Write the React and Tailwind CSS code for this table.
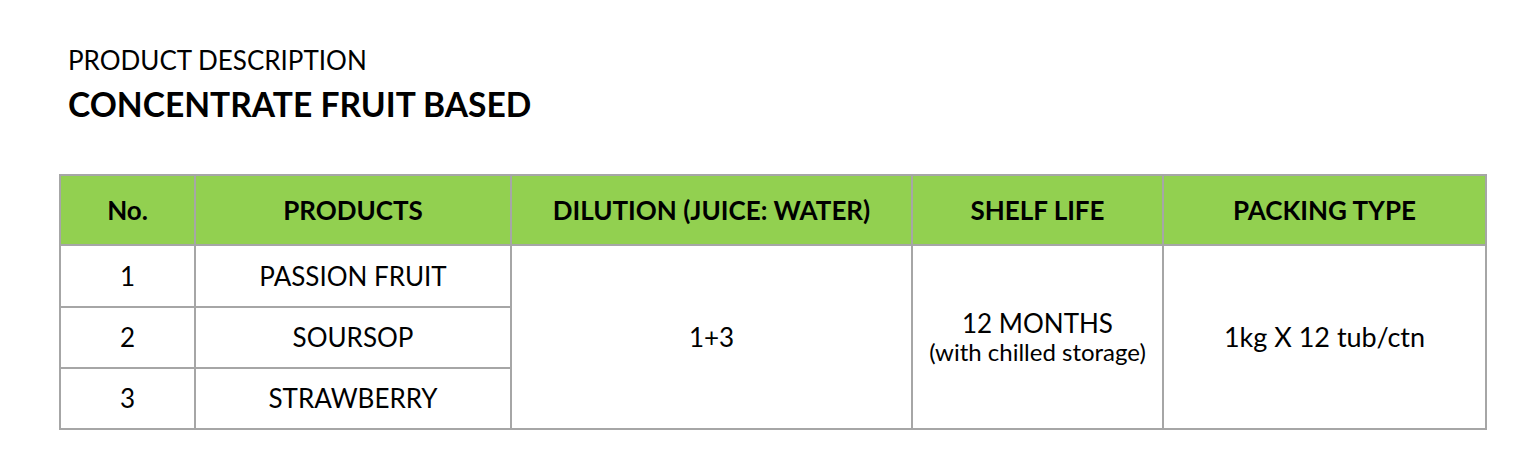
import React from 'react';

const rows = [
  { no: 1, name: 'PASSION FRUIT' },
  { no: 2, name: 'SOURSOP' },
  { no: 3, name: 'STRAWBERRY' },
];

const cell = 'border-2 border-[#a6a6a6] text-center align-middle';

export default function App() {
  return (
    <div className="min-h-[474px] w-[1536px] bg-white text-black" style={{ fontFamily: 'Lato, "Open Sans", sans-serif' }}>
      <div className="pl-[68px] pt-[44px]">
        <p className="text-[26px] leading-[32px]">PRODUCT DESCRIPTION</p>
        <h1 className="mt-[8px] text-[33.6px] font-bold leading-[40px]">CONCENTRATE FRUIT BASED</h1>
      </div>

      <div className="pl-[59px] pt-[50px]">
        <table className="border-collapse table-fixed w-[1426px]">
          <colgroup>
            <col className="w-[135px]" />
            <col className="w-[316px]" />
            <col className="w-[401px]" />
            <col className="w-[251px]" />
            <col className="w-[323px]" />
          </colgroup>
          <thead>
            <tr className="h-[70px] bg-[#92d050] text-[26px] font-bold">
              <th className={cell}>No.</th>
              <th className={cell}>PRODUCTS</th>
              <th className={cell}>DILUTION (JUICE: WATER)</th>
              <th className={cell}>SHELF LIFE</th>
              <th className={cell}>PACKING TYPE</th>
            </tr>
          </thead>
          <tbody className="text-[26px]">
            {rows.map((r, i) => (
              <tr key={r.no} className={i === 0 ? 'h-[62px]' : 'h-[61px]'}>
                <td className={cell}>{r.no}</td>
                <td className={cell}>{r.name}</td>
                {i === 0 && (
                  <>
                    <td rowSpan={3} className={cell}>1+3</td>
                    <td rowSpan={3} className={cell}>
                      <div className="leading-[30px]">12 MONTHS</div>
                      <div className="text-[24px] leading-[28px]">(with chilled storage)</div>
                    </td>
                    <td rowSpan={3} className={`${cell} text-[27px]`}>1kg X 12 tub/ctn</td>
                  </>
                )}
              </tr>
            ))}
          </tbody>
        </table>
      </div>
    </div>
  );
}
